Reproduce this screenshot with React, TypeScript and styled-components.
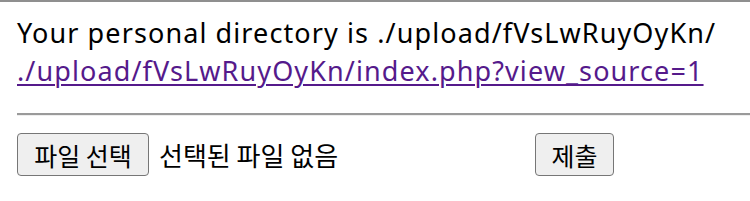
import styled, { createGlobalStyle } from 'styled-components'

const GlobalStyle = createGlobalStyle`
  html, body {
    margin: 0;
    padding: 0;
    background: #fff;
  }
  body {
    font-family: 'Noto Sans', 'Noto Sans CJK KR', sans-serif;
    color: #000;
  }
`

const Page = styled.div`
  border-top: 2px solid #8f8f8f;
  padding: 12px 0 0 17px;
  width: 750px;
  box-sizing: border-box;
  overflow: hidden;
`

const Intro = styled.p`
  margin: 0;
  font-size: 27px;
  line-height: 38px;
  letter-spacing: 1.1px;
  white-space: nowrap;
`

const SourceLink = styled.a`
  color: #551a8b;
  text-decoration: underline;
  text-underline-offset: 3px;
  text-decoration-thickness: 2px;
`

const Rule = styled.hr`
  margin: 23px 0 0 0;
  border: none;
  border-top: 2px solid #9a9a9a;
  border-bottom: 1px solid #eeeeee;
  height: 0;
`

const UploadForm = styled.form`
  display: flex;
  align-items: center;
  margin-top: 17px;
`

const FilePicker = styled.label`
  display: flex;
  align-items: center;
  gap: 10px;
  width: 518px;
`

const HiddenInput = styled.input`
  display: none;
`

const FormButton = styled.span<{ $width: number }>`
  display: inline-flex;
  align-items: center;
  justify-content: center;
  box-sizing: border-box;
  width: ${(p) => p.$width}px;
  height: 43px;
  padding: 0;
  font-family: 'Noto Sans CJK KR', sans-serif;
  font-size: 25px;
  background: #efefef;
  border: 1px solid #767676;
  border-radius: 4px;
  color: #000;
  cursor: default;
`

const FileStatus = styled.span`
  font-family: 'Noto Sans CJK KR', sans-serif;
  font-size: 26px;
  white-space: nowrap;
`

export default function App() {
  return (
    <>
      <GlobalStyle />
      <Page>
        <Intro>
          Your personal directory is ./upload/fVsLwRuyOyKn/
          <br />
          <SourceLink href="#">./upload/fVsLwRuyOyKn/index.php?view_source=1</SourceLink>
        </Intro>
        <Rule />
        <UploadForm onSubmit={(e) => e.preventDefault()}>
          <FilePicker>
            <HiddenInput type="file" name="file" />
            <FormButton $width={132}>파일 선택</FormButton>
            <FileStatus>선택된 파일 없음</FileStatus>
          </FilePicker>
          <FormButton as="button" type="submit" $width={79}>
            제출
          </FormButton>
        </UploadForm>
      </Page>
    </>
  )
}
